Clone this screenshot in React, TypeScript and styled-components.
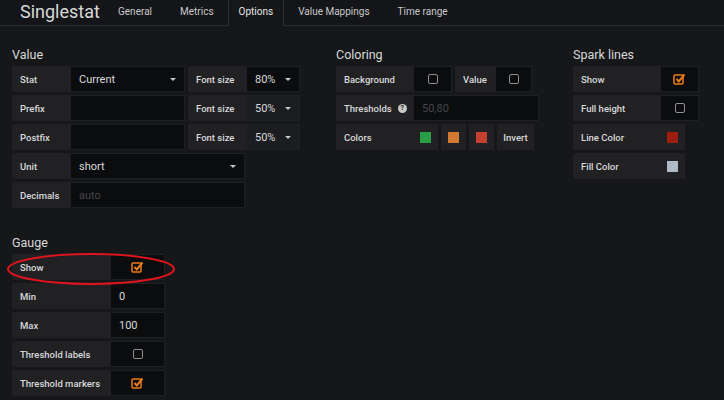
import React from "react";
import styled, { createGlobalStyle } from "styled-components";

const G = createGlobalStyle`
  body { margin:0; background:#161719; font-family: Roboto, "Liberation Sans", sans-serif; color:#d8d9da; }
`;
const Page = styled.div`width:724px;height:400px;overflow:hidden;background:#161719;position:relative;`;
const TabBar = styled.div`display:flex;align-items:flex-end;height:25px;border-bottom:1px solid #292a2d;background:#141518;padding-left:20px;`;
const Title = styled.div`font-size:18px;color:#d8d9da;width:84px;height:25px;line-height:23px;`;
const Tab = styled.div<{ $active?: boolean }>`
  font-size:10px;height:25px;line-height:23px;padding:0 ${p => (p.$active ? 10 : 14)}px;
  color:${p => (p.$active ? "#e3e3e3" : "#c8c8c8")};
  ${p => p.$active ? "background:#161719;border:1px solid #2c2d30;border-bottom:none;margin-bottom:-1px;height:26px;" : ""}
`;
const Body = styled.div`display:flex;padding:21px 0 0 12px;`;
const Col = styled.div<{ $w: number }>`width:${p => p.$w}px;display:flex;flex-direction:column;gap:3px;`;
const H = styled.div<{ $top?: number }>`font-size:12.5px;color:#d8d9da;height:14px;margin:${p => p.$top ?? 0}px 0 2px;`;
const Row = styled.div`display:flex;gap:3px;height:26px;`;
const Seg = styled.div`display:flex;`;
const Label = styled.div<{ $w: number }>`width:${p => p.$w}px;background:#212124;font-size:9.5px;font-weight:500;color:#d8d9da;display:flex;align-items:center;padding-left:8px;box-sizing:border-box;border-radius:2px 0 0 2px;gap:6px;`;
const Input = styled.div<{ $w: number; $bg?: string; $muted?: boolean }>`width:${p => p.$w}px;background:${p => p.$bg ?? "#0b0c0e"};font-size:11px;color:${p => (p.$muted ? "#45464a" : "#d8d9da")};display:flex;align-items:center;justify-content:space-between;padding:0 8px;box-sizing:border-box;border:1px solid #1f2023;`;
const Caret = styled.span`width:0;height:0;border-left:3px solid transparent;border-right:3px solid transparent;border-top:3px solid #c8c8c8;`;
const CheckCell = styled.div<{ $w: number }>`width:${p => p.$w}px;background:#0b0c0e;display:flex;align-items:center;justify-content:center;border:1px solid #1f2023;box-sizing:border-box;`;
const Box = styled.span`width:10px;height:10px;border:1.5px solid #8e8e8e;border-radius:2px;box-sizing:border-box;`;
const Swatch = styled.div<{ $w: number }>`width:${p => p.$w}px;background:#212124;display:flex;align-items:center;justify-content:center;font-size:9.5px;font-weight:500;`;
const Sq = styled.span<{ $c: string }>`width:11px;height:11px;background:${p => p.$c};`;
const Help = styled.span`width:9px;height:9px;border-radius:50%;background:#c8c8c8;color:#212124;font-size:7px;font-weight:700;display:inline-flex;align-items:center;justify-content:center;`;
const Ellipse = styled.svg`position:absolute;left:6px;top:252px;`;

const Checked = () => (
  <svg width="13" height="12" viewBox="0 0 13 12">
    <rect x="1" y="2" width="9" height="9" rx="1" fill="none" stroke="#eb7b18" strokeWidth="1.5" />
    <path d="M3.5 6 L5.8 8.5 L11.5 1.5" fill="none" stroke="#eb7b18" strokeWidth="2" />
  </svg>
);

export default function App() {
  return (
    <Page>
      <G />
      <TabBar>
        <Title>Singlestat</Title>
        <Tab>General</Tab>
        <Tab>Metrics</Tab>
        <Tab $active>Options</Tab>
        <Tab>Value Mappings</Tab>
        <Tab>Time range</Tab>
      </TabBar>
      <Body>
        <Col $w={324}>
          <H>Value</H>
          <Row>
            <Seg><Label $w={58}>Stat</Label><Input $w={115}>Current<Caret /></Input></Seg>
            <Seg><Label $w={58}>Font size</Label><Input $w={54}>80%<Caret /></Input></Seg>
          </Row>
          <Row>
            <Seg><Label $w={58}>Prefix</Label><Input $w={115} /></Seg>
            <Seg><Label $w={58}>Font size</Label><Input $w={54} $bg="#1c1d20">50%<Caret /></Input></Seg>
          </Row>
          <Row>
            <Seg><Label $w={58}>Postfix</Label><Input $w={115} /></Seg>
            <Seg><Label $w={58}>Font size</Label><Input $w={54} $bg="#1c1d20">50%<Caret /></Input></Seg>
          </Row>
          <Row><Seg><Label $w={58}>Unit</Label><Input $w={175}>short<Caret /></Input></Seg></Row>
          <Row><Seg><Label $w={58}>Decimals</Label><Input $w={175} $muted>auto</Input></Seg></Row>
          <H $top={24}>Gauge</H>
          <Row><Seg><Label $w={98}>Show</Label><CheckCell $w={55}><Checked /></CheckCell></Seg></Row>
          <Row><Seg><Label $w={98}>Min</Label><Input $w={55}>0</Input></Seg></Row>
          <Row><Seg><Label $w={98}>Max</Label><Input $w={55}>100</Input></Seg></Row>
          <Row><Seg><Label $w={98}>Threshold labels</Label><CheckCell $w={55}><Box /></CheckCell></Seg></Row>
          <Row><Seg><Label $w={98}>Threshold markers</Label><CheckCell $w={55}><Checked /></CheckCell></Seg></Row>
        </Col>
        <Col $w={237}>
          <H>Coloring</H>
          <Row>
            <Seg><Label $w={77}>Background</Label><CheckCell $w={39}><Box /></CheckCell></Seg>
            <Seg><Label $w={40}>Value</Label><CheckCell $w={37}><Box /></CheckCell></Seg>
          </Row>
          <Row><Seg><Label $w={77}>Thresholds <Help>?</Help></Label><Input $w={126} $muted>50,80</Input></Seg></Row>
          <Row>
            <Seg><Label $w={77}>Colors</Label><Swatch $w={25}><Sq $c="#299c46" /></Swatch></Seg>
            <Swatch $w={25}><Sq $c="#d17a32" /></Swatch>
            <Swatch $w={25}><Sq $c="#c4412f" /></Swatch>
            <Swatch $w={37}>Invert</Swatch>
          </Row>
        </Col>
        <Col $w={130}>
          <H>Spark lines</H>
          <Row><Seg><Label $w={87}>Show</Label><CheckCell $w={39}><Checked /></CheckCell></Seg></Row>
          <Row><Seg><Label $w={87}>Full height</Label><CheckCell $w={39}><Box /></CheckCell></Seg></Row>
          <Row><Seg><Label $w={87}>Line Color</Label><Swatch $w={25}><Sq $c="#9d1d10" /></Swatch></Seg></Row>
          <Row><Seg><Label $w={87}>Fill Color</Label><Swatch $w={25}><Sq $c="#aebbc6" /></Swatch></Seg></Row>
        </Col>
      </Body>
      <Ellipse width="170" height="34"><ellipse cx="85" cy="17" rx="83" ry="15" fill="none" stroke="#e0141e" strokeWidth="2" /></Ellipse>
    </Page>
  );
}
